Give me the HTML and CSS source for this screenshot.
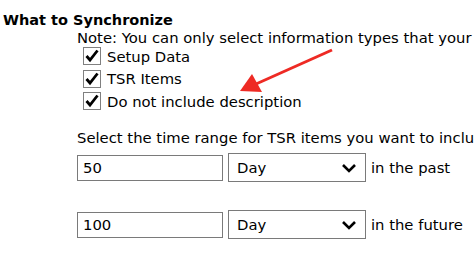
FILE: index.html
```html
<!DOCTYPE html>
<html lang="en">
<head>
    <meta charset="UTF-8">
    <title>What to Synchronize</title>
    <link rel="stylesheet" href="styles.css">
</head>
<body>
    <div class="sync-page">
        <h3 class="sync-title">What to Synchronize</h3>
        <div class="sync-body">
            <p class="note">Note: You can only select information types that your</p>

            <!-- Information types -->
            <div class="check-list">
                <label class="check-row">
                    <span class="check-box"><svg width="16" height="16" viewBox="0 0 16 16"><path d="M2.5 8 L6 12 L13.5 2.5" fill="none" stroke="#000" stroke-width="2.8"/></svg></span>
                    Setup Data
                </label>
                <label class="check-row">
                    <span class="check-box"><svg width="16" height="16" viewBox="0 0 16 16"><path d="M2.5 8 L6 12 L13.5 2.5" fill="none" stroke="#000" stroke-width="2.8"/></svg></span>
                    TSR Items
                </label>
                <label class="check-row">
                    <span class="check-box"><svg width="16" height="16" viewBox="0 0 16 16"><path d="M2.5 8 L6 12 L13.5 2.5" fill="none" stroke="#000" stroke-width="2.8"/></svg></span>
                    Do not include description
                </label>
            </div>

            <p class="range-label">Select the time range for TSR items you want to include</p>

            <!-- Time range rows -->
            <div class="range-row">
                <div class="text-field">50</div>
                <div class="select-field">Day
                    <svg class="chev" width="16" height="10" viewBox="0 0 16 10"><path d="M2 2 L8 8 L14 2" fill="none" stroke="#000" stroke-width="2.6"/></svg>
                </div>
                <span>in the past</span>
            </div>
            <div class="range-row">
                <div class="text-field">100</div>
                <div class="select-field">Day
                    <svg class="chev" width="16" height="10" viewBox="0 0 16 10"><path d="M2 2 L8 8 L14 2" fill="none" stroke="#000" stroke-width="2.6"/></svg>
                </div>
                <span>in the future</span>
            </div>
        </div>

        <!-- annotation arrow -->
        <svg class="annot-arrow" width="110" height="50" viewBox="0 0 110 50">
            <line x1="94" y1="3" x2="18" y2="37" stroke="#ee2a24" stroke-width="3"/>
            <polygon points="2,44 14,27 24,45" fill="#ee2a24"/>
        </svg>
    </div>
</body>
</html>
```

FILE: styles.css
```css
body {
    margin: 0;
    background: #fff;
    font-family: "DejaVu Sans", Verdana, sans-serif;
    font-size: 14.8px;
    color: #000;
}

.sync-page {
    position: relative;
    width: 474px;
    height: 265px;
    overflow: hidden;
}

.sync-title {
    margin: 0;
    padding: 11px 0 0 3px;
    font-size: 14.5px;
    font-weight: bold;
    line-height: 18px;
}

.sync-body {
    padding-left: 77px;
}

.note {
    margin: 0;
    line-height: 18px;
    white-space: nowrap;
}

.check-list {
    display: flex;
    flex-direction: column;
    gap: 4.5px;
    margin: 0 0 0 6px;
}

.check-row {
    display: flex;
    align-items: center;
    gap: 6px;
    height: 18px;
}

.check-box {
    width: 18px;
    height: 18px;
    box-sizing: border-box;
    border: 1px solid #808080;
    background: #fff;
    display: flex;
    align-items: center;
    justify-content: center;
}

.range-label {
    margin: 19px 0 0;
    line-height: 18px;
    white-space: nowrap;
}

.range-row {
    display: flex;
    align-items: center;
    gap: 5px;
    margin-top: 6px;
}

.range-row + .range-row {
    margin-top: 28px;
}

.text-field {
    width: 146px;
    height: 26px;
    box-sizing: border-box;
    border: 1px solid #7a7a7a;
    padding: 0 5px;
    line-height: 24px;
}

.select-field {
    width: 138px;
    height: 29px;
    box-sizing: border-box;
    border: 1px solid #7a7a7a;
    padding: 0 8px;
    display: flex;
    align-items: center;
    justify-content: space-between;
}

.annot-arrow {
    position: absolute;
    left: 238px;
    top: 47px;
}
```
